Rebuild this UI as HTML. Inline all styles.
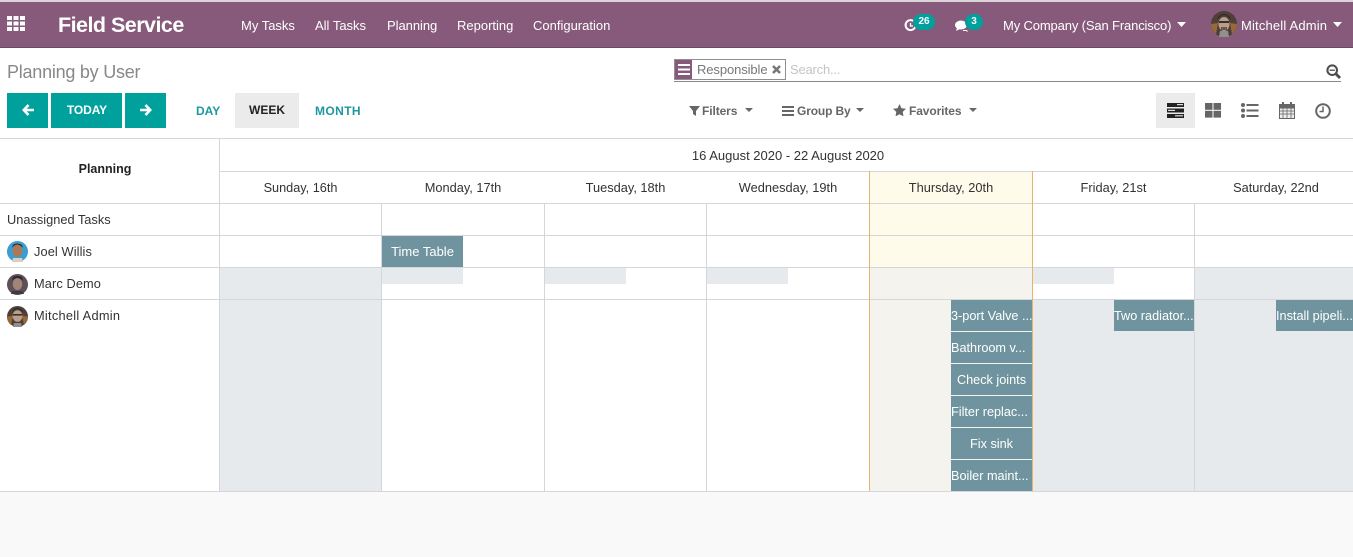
<!DOCTYPE html>
<html><head><meta charset="utf-8"><style>
html,body{margin:0;padding:0}
body{width:1353px;height:557px;overflow:hidden;position:relative;background:#fff;font-family:"Liberation Sans",Arial,sans-serif;font-size:13px;color:#333}
.a,.t{position:absolute}
.t{white-space:nowrap;line-height:16px}
.c{text-align:center}
.w{color:#fff}
.vl{position:absolute;width:1px;background:#d4d6da}
.hl{position:absolute;height:1px;background:#d4d6da}
.task{position:absolute;background:#6f949f;color:#fff;height:31px;line-height:32px;width:81px;overflow:hidden;text-align:center;white-space:nowrap;font-size:12.7px}
.gray{position:absolute;background:#e7eaed}
svg{position:absolute;display:block}
</style></head><body>
<div class="a" style="left:0;top:0;width:1353px;height:2px;background:#d8d4d8"></div>
<div class="a" style="left:0;top:2px;width:1353px;height:45px;background:#875a7b"></div>
<div class="a" style="left:0;top:47px;width:1353px;height:1px;background:#6b4a63"></div>
<svg style="left:7px;top:16px" width="18" height="15" fill="#fff"><rect width="5" height="4"/><rect x="6.500" width="5" height="4"/><rect x="13" width="5" height="4"/><rect y="5.500" width="5" height="4"/><rect x="6.500" y="5.500" width="5" height="4"/><rect x="13" y="5.500" width="5" height="4"/><rect y="11" width="5" height="4"/><rect x="6.500" y="11" width="5" height="4"/><rect x="13" y="11" width="5" height="4"/></svg>
<div class="t w" style="left:58px;top:12px;font-size:21.500px;line-height:27px;font-weight:bold;letter-spacing:-.53px">Field Service</div>
<div class="t w" style="left:241px;top:18px">My Tasks</div>
<div class="t w" style="left:315px;top:18px">All Tasks</div>
<div class="t w" style="left:387px;top:18px;letter-spacing:-.05px">Planning</div>
<div class="t w" style="left:457px;top:18px">Reporting</div>
<div class="t w" style="left:533px;top:18px">Configuration</div>
<svg style="left:904px;top:19px" width="13" height="13" fill="none" stroke="#fff" stroke-width="2"><path d="M10.500 3A5 5 0 1 0 11.500 7"/><path d="M6.500 4v3h2.500" stroke-width="1.300"/></svg>
<div class="a w c" style="left:913px;top:14px;width:22px;height:16px;border-radius:8px;background:#00a09d;font-size:10px;font-weight:bold;line-height:15px">26</div>
<svg style="left:955px;top:20px" width="14" height="12" fill="#fff"><ellipse cx="6" cy="5" rx="6" ry="4.500"/><path d="M2 8l-1 3 4-2zM8 10h4l1 2-2-1H8z"/></svg>
<div class="a w c" style="left:965px;top:14px;width:18px;height:16px;border-radius:8px;background:#00a09d;font-size:10px;font-weight:bold;line-height:15px">3</div>
<div class="t w" style="left:1003px;top:18px;letter-spacing:-.14px">My Company (San Francisco)</div>
<svg style="left:1177px;top:22px" width="9" height="5" fill="#fff"><path d="M0 0h9L4.500 5z"/></svg>
<svg style="left:1211px;top:11px" width="26" height="26"><circle cx="13" cy="13" r="13" fill="#4f3f38"/><path d="M0 13A13 13 0 0 0 5 23L7 12zM26 13a13 13 0 0 1-5 10L19 12z" fill="#97683a"/><ellipse cx="13" cy="13" rx="5.500" ry="7" fill="#b89e8b"/><path d="M6 9Q13-1 20 9L19 6Q13 0 7 6z" fill="#2d2a28"/><path d="M8 26l1-6h8l1 6z" fill="#8f8f8f"/><rect x="8" y="10" width="10" height="2" fill="#3b3029"/><rect x="10" y="16" width="6" height="3" fill="#6d5749"/></svg>
<div class="t w" style="left:1241px;top:18px;letter-spacing:.17px">Mitchell Admin</div>
<svg style="left:1333px;top:22px" width="9" height="5" fill="#fff"><path d="M0 0h9L4.500 5z"/></svg>

<div class="t" style="left:7px;top:61px;font-size:18px;line-height:22px;color:#888;letter-spacing:-.24px">Planning by User</div>

<div class="a" style="left:7px;top:93px;width:41px;height:35px;background:#00a09d"></div>
<div class="a w c" style="left:51px;top:93px;width:72px;height:35px;background:#00a09d;font-weight:bold;font-size:12px;line-height:35px;letter-spacing:-.1px">TODAY</div>
<div class="a" style="left:122px;top:93px;width:3px;height:35px;background:#fff"></div>
<div class="a" style="left:125px;top:93px;width:41px;height:35px;background:#00a09d"></div>
<svg style="left:22px;top:104px" width="12" height="12" fill="none" stroke="#fff" stroke-width="2.600"><path d="M6.500 1L1.800 6l4.700 5M2 6h10"/></svg>
<svg style="left:140px;top:104px" width="12" height="12" fill="none" stroke="#fff" stroke-width="2.600"><path d="M5.500 1l4.700 5-4.700 5M10 6H0"/></svg>
<div class="t" style="left:196px;top:103px;color:#1d97a0;font-weight:bold;font-size:12px">DAY</div>
<div class="a c" style="left:235px;top:93px;width:64px;height:35px;background:#ebebeb;color:#222;font-weight:bold;font-size:12px;line-height:35px">WEEK</div>
<div class="t" style="left:315px;top:103px;color:#1d97a0;font-weight:bold;font-size:12px;letter-spacing:.4px">MONTH</div>

<div class="a" style="left:674px;top:81px;width:667px;height:1px;background:#8a8a8a"></div>
<div class="a" style="left:674px;top:59px;width:110px;height:19px;border:1px solid #8f8f8f;box-sizing:content-box"></div>
<div class="a" style="left:675px;top:60px;width:17px;height:19px;background:#875a7b"></div>
<svg style="left:678px;top:64px" width="12" height="11" fill="#fff"><rect width="12" height="2"/><rect y="4.500" width="12" height="2"/><rect y="9" width="12" height="2"/></svg>
<div class="t" style="left:697px;top:62px;color:#777;letter-spacing:-.1px">Responsible</div>
<svg style="left:772px;top:65px" width="9" height="9" stroke="#777" stroke-width="2.600"><path d="M1 1l7 7M8 1L1 8"/></svg>
<div class="t" style="left:790px;top:62px;color:#c4c4c4;letter-spacing:-.2px">Search...</div>
<svg style="left:1326px;top:64px" width="15" height="15" fill="none" stroke="#4c4c4c" stroke-width="2"><circle cx="6.200" cy="6.200" r="4.800"/><path d="M9.800 9.800l4.200 4.200" stroke-width="2.800"/><path d="M3.500 6.200h5.400" stroke-width="1.300"/></svg>

<svg style="left:689px;top:106px" width="11" height="10" fill="#666"><path d="M0 0h11L7 5v5L4 8V5z"/></svg>
<div class="t" style="left:702px;top:103px;color:#666;font-weight:bold;font-size:12px;letter-spacing:-.1px">Filters</div>
<svg style="left:745px;top:108px" width="8" height="4" fill="#666"><path d="M0 0h8L4 4z"/></svg>
<svg style="left:782px;top:106px" width="12" height="10" fill="#666"><rect width="12" height="2"/><rect y="4" width="12" height="2"/><rect y="8" width="12" height="2"/></svg>
<div class="t" style="left:797px;top:103px;color:#666;font-weight:bold;font-size:12px;letter-spacing:-.14px">Group By</div>
<svg style="left:856px;top:108px" width="8" height="4" fill="#666"><path d="M0 0h8L4 4z"/></svg>
<svg style="left:893px;top:104px" width="13" height="12" fill="#666"><path d="M6.500 0l2 4.200 4.500.6-3.300 3.100.8 4.500-4-2.200-4 2.200.8-4.500L0 4.800l4.500-.6z"/></svg>
<div class="t" style="left:909px;top:103px;color:#666;font-weight:bold;font-size:12px;letter-spacing:-.1px">Favorites</div>
<svg style="left:969px;top:108px" width="8" height="4" fill="#666"><path d="M0 0h8L4 4z"/></svg>

<div class="a" style="left:1156px;top:93px;width:39px;height:35px;background:#ebebeb"></div>
<svg style="left:1167px;top:103px" width="17" height="15" fill="#222"><rect width="17" height="4"/><rect y="5.500" width="17" height="4"/><rect y="11" width="17" height="4"/><rect x="10" y="1" width="6" height="1.200" fill="#ddd"/><rect x="1" y="6.800" width="7" height="1.200" fill="#ddd"/><rect x="8" y="12.200" width="8" height="1.200" fill="#ddd"/></svg>
<svg style="left:1205px;top:103px" width="16" height="15" fill="#666"><rect width="7.500" height="6.800"/><rect x="8.500" width="7.500" height="6.800"/><rect y="7.800" width="7.500" height="6.800"/><rect x="8.500" y="7.800" width="7.500" height="6.800"/></svg>
<svg style="left:1241px;top:103px" width="18" height="15" fill="#666"><circle cx="2" cy="2" r="2"/><circle cx="2" cy="7.500" r="2"/><circle cx="2" cy="13" r="2"/><rect x="5.500" y="1" width="12" height="2"/><rect x="5.500" y="6.500" width="12" height="2"/><rect x="5.500" y="12" width="12" height="2"/></svg>
<svg style="left:1279px;top:102px" width="16" height="17" fill="none" stroke="#666"><rect x=".5" y="3" width="15" height="13.500" fill="#eee"/><rect x="0" y="2.500" width="16" height="3.500" fill="#666"/><path d="M4 0v4M12 0v4" stroke-width="2"/><path d="M0 9h16M0 12h16M4 6v10M8 6v10M12 6v10" stroke-width=".8"/></svg>
<svg style="left:1315px;top:103px" width="16" height="16" fill="none" stroke="#666" stroke-width="2"><circle cx="8" cy="8" r="6.800"/><path d="M8 3.500V8.500H4.500" stroke-width="1.500"/></svg>

<!-- grid -->
<div class="a" style="left:0;top:492px;width:1353px;height:65px;background:#f9f9f9"></div>
<div class="a" style="left:870px;top:172px;width:162px;height:95px;background:#fffbea"></div>
<div class="a" style="left:870px;top:268px;width:162px;height:223px;background:#f4f3ee"></div>
<div class="gray" style="left:220px;top:268px;width:161px;height:223px"></div>
<div class="gray" style="left:1033px;top:300px;width:161px;height:191px"></div>
<div class="gray" style="left:1195px;top:268px;width:158px;height:223px"></div>
<div class="gray" style="left:382px;top:268px;width:81px;height:16px"></div>
<div class="gray" style="left:545px;top:268px;width:81px;height:16px"></div>
<div class="gray" style="left:707px;top:268px;width:81px;height:16px"></div>
<div class="gray" style="left:1033px;top:268px;width:81px;height:16px"></div>

<div class="hl" style="left:0;top:138px;width:1353px"></div>
<div class="hl" style="left:219px;top:171px;width:1134px"></div>
<div class="hl" style="left:0;top:203px;width:1353px"></div>
<div class="hl" style="left:0;top:235px;width:1353px"></div>
<div class="hl" style="left:0;top:267px;width:1353px"></div>
<div class="hl" style="left:0;top:299px;width:1353px"></div>
<div class="hl" style="left:0;top:491px;width:1353px"></div>
<div class="vl" style="left:219px;top:138px;height:353px"></div>
<div class="vl" style="left:381px;top:203px;height:288px"></div>
<div class="vl" style="left:544px;top:203px;height:288px"></div>
<div class="vl" style="left:706px;top:203px;height:288px"></div>
<div class="vl" style="left:1194px;top:203px;height:288px"></div>
<div class="vl" style="left:869px;top:171px;height:320px;background:#e8b273"></div>
<div class="vl" style="left:1032px;top:171px;height:320px;background:#e8b273"></div>

<div class="t c" style="left:0;top:161px;width:210px;font-weight:bold;font-size:12.500px;color:#222">Planning</div>
<div class="t c" style="left:220px;top:148px;width:1136px;color:#333;font-size:13px">16 August 2020 - 22 August 2020</div>
<div class="t c" style="left:220px;top:180px;width:161px;font-size:12.700px">Sunday, 16th</div>
<div class="t c" style="left:382px;top:180px;width:162px;font-size:12.800px">Monday, 17th</div>
<div class="t c" style="left:545px;top:180px;width:161px;font-size:12.800px">Tuesday, 18th</div>
<div class="t c" style="left:707px;top:180px;width:162px;font-size:12.800px">Wednesday, 19th</div>
<div class="t c" style="left:870px;top:180px;width:162px;font-size:12.800px">Thursday, 20th</div>
<div class="t c" style="left:1033px;top:180px;width:161px;font-size:12.800px">Friday, 21st</div>
<div class="t c" style="left:1195px;top:180px;width:162px;font-size:12.800px">Saturday, 22nd</div>

<div class="t" style="left:7px;top:212px;font-size:12.800px">Unassigned Tasks</div>
<svg style="left:7px;top:241px" width="21" height="21"><circle cx="10.500" cy="10.500" r="10.500" fill="#3b9ed2"/><ellipse cx="10.500" cy="9.500" rx="5" ry="6.500" fill="#a9795a"/><path d="M5 7Q10 0 16 7L15 4Q10 1 6 4z" fill="#2b2320"/><path d="M5 21l1-4h9l1 4z" fill="#d9cfc2"/></svg>
<div class="t" style="left:34px;top:244px;font-size:12.800px;letter-spacing:.1px">Joel Willis</div>
<svg style="left:7px;top:274px" width="21" height="21"><circle cx="10.500" cy="10.500" r="10.500" fill="#5e4f58"/><ellipse cx="10.500" cy="10" rx="4.800" ry="6" fill="#a08678"/><path d="M5 7Q10 1 16 7L15 3Q10 1 6 3z" fill="#2f2a2b"/><path d="M4 20l1-3h11l1 3z" fill="#3e3a45"/></svg>
<div class="t" style="left:34px;top:276px;font-size:12.800px;letter-spacing:.1px">Marc Demo</div>
<svg style="left:7px;top:306px" width="21" height="21"><circle cx="10.500" cy="10.500" r="10.500" fill="#4f3f38"/><path d="M0 10.500A10.500 10.500 0 0 0 4 19L6 10zM21 10.500a10.500 10.500 0 0 1-4 8.500L15 10z" fill="#97683a"/><ellipse cx="10.500" cy="10" rx="5" ry="5.800" fill="#b89e8b"/><path d="M5 7Q10-1 16 7L15 4Q10 0 6 4z" fill="#2d2a28"/><rect x="6" y="8" width="9" height="1.600" fill="#3b3029"/><path d="M6 21l1-4h7l1 4z" fill="#8f8f8f"/></svg>
<div class="t" style="left:34px;top:308px;font-size:12.800px;letter-spacing:.27px">Mitchell Admin</div>

<div class="task" style="left:382px;top:236px;font-size:13px">Time Table</div>
<div class="task" style="left:951px;top:300px;text-align:left">3-port Valve ...</div>
<div class="task" style="left:951px;top:332px;text-align:left">Bathroom v...</div>
<div class="task" style="left:951px;top:364px">Check joints</div>
<div class="task" style="left:951px;top:396px;text-align:left">Filter replac...</div>
<div class="task" style="left:951px;top:428px">Fix sink</div>
<div class="task" style="left:951px;top:460px;text-align:left">Boiler maint...</div>
<div class="task" style="left:1114px;top:300px;width:80px;text-align:left">Two radiator...</div>
<div class="task" style="left:1276px;top:300px;width:77px;text-align:left">Install pipeli...</div>
</body></html>
